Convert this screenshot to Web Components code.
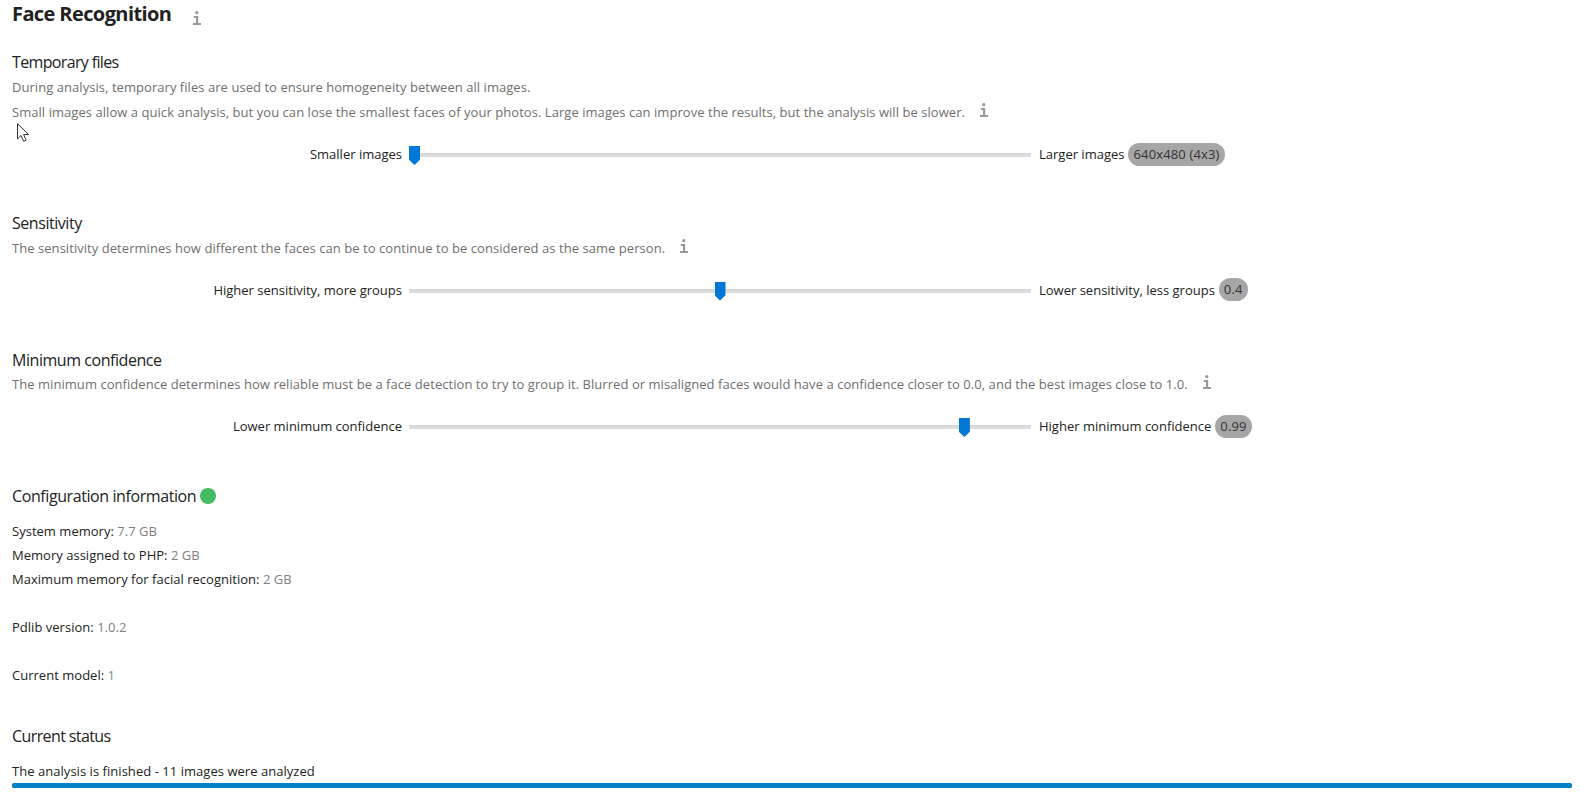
<!DOCTYPE html>
<html>
<head>
<meta charset="utf-8">
<title>Face Recognition</title>
<style>
html, body { margin: 0; padding: 0; background: #fff; }
body { font-family: "Open Sans", "Noto Sans", sans-serif; font-size: 13px; color: #222; overflow: hidden; height: 793px; }
</style>
</head>
<body>
<fr-page>
  <fr-section heading="Temporary files" tracking="-0.65px">
    <fr-desc>During analysis, temporary files are used to ensure homogeneity between all images.</fr-desc>
    <fr-desc info>Small images allow a quick analysis, but you can lose the smallest faces of your photos. Large images can improve the results, but the analysis will be slower.</fr-desc>
    <fr-slider left="Smaller images" right="Larger images" badge="640x480 (4x3)" min="0" max="100" value="0"></fr-slider>
  </fr-section>
  <fr-section heading="Sensitivity">
    <fr-desc info>The sensitivity determines how different the faces can be to continue to be considered as the same person.</fr-desc>
    <fr-slider left="Higher sensitivity, more groups" right="Lower sensitivity, less groups" badge="0.4" min="0.2" max="0.6" step="0.01" value="0.4"></fr-slider>
  </fr-section>
  <fr-section heading="Minimum confidence">
    <fr-desc info>The minimum confidence determines how reliable must be a face detection to try to group it. Blurred or misaligned faces would have a confidence closer to 0.0, and the best images close to 1.0.</fr-desc>
    <fr-slider left="Lower minimum confidence" right="Higher minimum confidence" badge="0.99" min="0" max="1.1" step="0.01" value="0.99"></fr-slider>
  </fr-section>
  <fr-config></fr-config>
  <fr-status></fr-status>
</fr-page>

<script>
class FrInfo extends HTMLElement {
    constructor() {
        super();
        this.attachShadow({ mode: 'open' });
        this.shadowRoot.innerHTML = `
            <style>
                :host { display: inline-block; width: 8px; height: 14px; line-height: 0; flex: none; }
                svg { display: block; }
            </style>
            <svg width="8" height="14" viewBox="0 0 8 14" fill="#999">
                <circle cx="3.8" cy="1.7" r="1.6"/>
                <path d="M.8 5h4.4v7H8v2H0v-2h3V7H.8z"/>
            </svg>
        `;
    }
}

class FrDesc extends HTMLElement {
    constructor() {
        super();
        this.attachShadow({ mode: 'open' });
        this.shadowRoot.innerHTML = `
            <style>
                :host { display: flex; align-items: flex-start; color: #6f6f6f; height: 25.5px; line-height: 25.5px; letter-spacing: 0.05px; white-space: nowrap; }
                fr-info { margin: 3px 0 0 15px; }
            </style>
            <slot></slot>
        `;
    }

    connectedCallback() {
        if (this.hasAttribute('info') && !this.shadowRoot.querySelector('fr-info')) {
            this.shadowRoot.appendChild(document.createElement('fr-info'));
        }
    }
}

class FrSlider extends HTMLElement {
    constructor() {
        super();
        this.attachShadow({ mode: 'open' });
    }

    connectedCallback() {
        const a = (n, d) => this.getAttribute(n) || d;
        this.shadowRoot.innerHTML = `
            <style>
                :host { display: flex; align-items: center; height: 24px; color: #222; }
                .izq { width: 390px; flex: none; text-align: right; white-space: nowrap; }
                input {
                    -webkit-appearance: none; appearance: none;
                    width: 622px; height: 20px; margin: 2px 8px 0 7px; padding: 0;
                    background: transparent; flex: none;
                }
                input::-webkit-slider-runnable-track { height: 4px; background: #dcdcdc; border-top: 1px solid #d0d0d0; box-sizing: border-box; }
                input::-webkit-slider-thumb {
                    -webkit-appearance: none; appearance: none;
                    width: 11px; height: 19px; margin-top: -8px; border: 0;
                    background: #0078d7;
                    clip-path: polygon(0 0, 100% 0, 100% 72%, 50% 100%, 0 72%);
                }
                .pill {
                    margin-left: 4px; padding: 0 5px; height: 23px; line-height: 23px;
                    border-radius: 12px; background: #a6a6a6; color: #333; white-space: nowrap;
                    letter-spacing: 0.15px;
                }
            </style>
            <span class="izq">${a('left', '')}</span>
            <input type="range" min="${a('min', 0)}" max="${a('max', 100)}" step="${a('step', 1)}" value="${a('value', 0)}">
            <span>${a('right', '')}</span>
            <span class="pill">${a('badge', '')}</span>
        `;
    }
}

class FrSection extends HTMLElement {
    constructor() {
        super();
        this.attachShadow({ mode: 'open' });
    }

    connectedCallback() {
        this.shadowRoot.innerHTML = `
            <style>
                :host { display: block; padding-bottom: 46px; }
                :host(:first-child) { padding-bottom: 45px; }
                h3 { margin: 0; font-size: 16px; font-weight: 400; line-height: 24px; color: #222; letter-spacing: ${this.getAttribute('tracking') || '-0.45px'}; height: 24.5px; }
                .cuerpo { display: flex; flex-direction: column; }
                ::slotted(fr-slider) { margin-top: 16.5px; }
            </style>
            <h3>${this.getAttribute('heading')}</h3>
            <div class="cuerpo"><slot></slot></div>
        `;
    }
}

class FrConfig extends HTMLElement {
    constructor() {
        super();
        this.attachShadow({ mode: 'open' });
        this.shadowRoot.innerHTML = `
            <style>
                :host { display: block; letter-spacing: 0.02px; }
                h3 { margin: 0 0 11px; display: flex; align-items: center; gap: 4px; font-size: 16px; font-weight: 400; line-height: 24px; color: #222; letter-spacing: -0.41px; }
                .punto { width: 16px; height: 16px; border-radius: 50%; background: #46ba61; }
                p { margin: 0; line-height: 24px; color: #222; }
                p span { color: #808080; }
                .sep { margin-bottom: 24px; }
            </style>
            <h3>Configuration information <span class="punto"></span></h3>
            <p>System memory: <span>7.7 GB</span></p>
            <p>Memory assigned to PHP: <span>2 GB</span></p>
            <p class="sep">Maximum memory for facial recognition: <span>2 GB</span></p>
            <p class="sep">Pdlib version: <span>1.0.2</span></p>
            <p>Current model: <span style="color:#5a9a8a">1</span></p>
        `;
    }
}

class FrStatus extends HTMLElement {
    constructor() {
        super();
        this.attachShadow({ mode: 'open' });
        this.shadowRoot.innerHTML = `
            <style>
                :host { display: block; margin-top: 37px; letter-spacing: 0.04px; }
                h3 { margin: 0 0 11px; font-size: 16px; font-weight: 400; line-height: 24px; color: #222; letter-spacing: -0.6px; }
                p { margin: 0; height: 24px; line-height: 24px; color: #222; }
                progress {
                    -webkit-appearance: none; appearance: none; display: block;
                    width: 100%; height: 5px; border: 0;
                }
                progress::-webkit-progress-bar { background: #0082c9; border-radius: 3px; }
                progress::-webkit-progress-value { background: #0082c9; border-radius: 3px; }
            </style>
            <h3>Current status</h3>
            <p>The analysis is finished - 11 images were analyzed</p>
            <progress max="1" value="1"></progress>
        `;
    }
}

class FrPage extends HTMLElement {
    constructor() {
        super();
        this.attachShadow({ mode: 'open' });
        this.shadowRoot.innerHTML = `
            <style>
                :host { display: block; position: relative; padding: 2px 8px 0 12px; }
                h2 { margin: 0 0 24px; display: flex; align-items: center; font-size: 20px; font-weight: 700; line-height: 24px; color: #222; letter-spacing: -0.6px; }
                h2 fr-info { margin: 8px 0 0 22px; }
                .cursor { position: absolute; left: 17px; top: 123px; }
            </style>
            <h2>Face Recognition <fr-info></fr-info></h2>
            <slot></slot>
            <svg class="cursor" width="13" height="19" viewBox="0 0 13 19">
                <path d="M.5.7v15.2l3.6-3.4 2.6 5.8 2.5-1.1-2.6-5.7h5z" fill="#fff" stroke="#333" stroke-width="1"/>
            </svg>
        `;
    }
}

customElements.define('fr-info', FrInfo);
customElements.define('fr-desc', FrDesc);
customElements.define('fr-slider', FrSlider);
customElements.define('fr-section', FrSection);
customElements.define('fr-config', FrConfig);
customElements.define('fr-status', FrStatus);
customElements.define('fr-page', FrPage);
</script>
</body>
</html>
